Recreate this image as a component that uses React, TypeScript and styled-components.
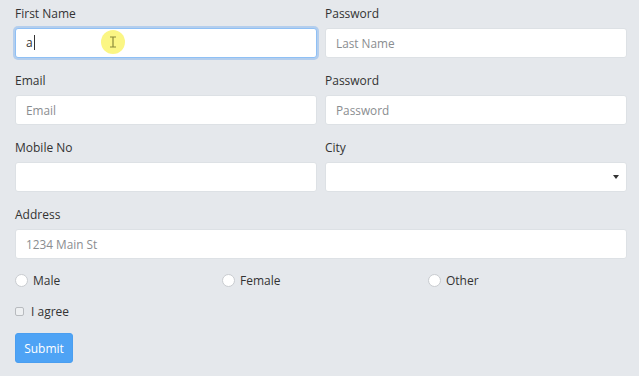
import React from 'react';
import styled, { createGlobalStyle } from 'styled-components';

const GlobalStyle = createGlobalStyle`
  html, body {
    margin: 0;
    padding: 0;
    background: #e5e8ec;
  }
  body {
    font-family: 'Open Sans', 'Noto Sans', Arial, sans-serif;
    color: #333;
  }
  * {
    box-sizing: border-box;
  }
`;

const Form = styled.form`
  position: relative;
  width: 639px;
  height: 376px;
  padding: 4px 12px 0 15px;
`;

const Row = styled.div`
  display: grid;
  grid-template-columns: 1fr 1fr;
  column-gap: 8px;
`;

const Group = styled.div`
  display: flex;
  flex-direction: column;
  margin-bottom: 13px;
`;

const Label = styled.label`
  font-size: 12px;
  line-height: 20px;
  height: 20px;
  margin-bottom: 4px;
  color: #333;
`;

const Input = styled.input<{ $focused?: boolean }>`
  height: 30px;
  width: 100%;
  padding: 0 10px;
  font-family: inherit;
  font-size: 11.8px;
  color: #444;
  background: #fff;
  border: 1px solid ${props => (props.$focused ? '#8fc0f5' : '#dde1e5')};
  border-radius: 3px;
  outline: none;
  box-shadow: ${props =>
    props.$focused ? '0 0 0 2px rgba(120, 175, 240, 0.45)' : 'none'};

  &::placeholder {
    color: #8a8d90;
  }
`;

const SelectBox = styled.div`
  position: relative;
  height: 30px;
  background: #fff;
  border: 1px solid #dde1e5;
  border-radius: 3px;
`;

const Caret = styled.span`
  position: absolute;
  right: 7px;
  top: 12px;
  width: 0;
  height: 0;
  border-left: 3px solid transparent;
  border-right: 3px solid transparent;
  border-top: 4px solid #333;
`;

const RadioRow = styled.div`
  display: grid;
  grid-template-columns: 207px 206px 1fr;
  height: 16px;
  align-items: center;
`;

const Option = styled.label`
  display: flex;
  align-items: center;
  gap: 5px;
  font-size: 12px;
  color: #333;
`;

const Radio = styled.span`
  width: 13px;
  height: 13px;
  border-radius: 50%;
  background: #fff;
  border: 1px solid #c9ccd0;
`;

const CheckRow = styled.div`
  display: flex;
  align-items: center;
  gap: 7px;
  height: 16px;
  margin-top: 15px;
  font-size: 12px;
`;

const Checkbox = styled.span`
  width: 9px;
  height: 9px;
  border: 1px solid #b8bbbf;
  border-radius: 2px;
  background: #eef0f2;
`;

const SubmitButton = styled.button`
  margin-top: 14px;
  height: 30px;
  width: 58px;
  padding: 0;
  font-family: inherit;
  font-size: 12px;
  color: #fff;
  background: #4ea3f5;
  border: 1px solid #4a9ef0;
  border-radius: 3px;
`;

const CursorHalo = styled.div`
  position: absolute;
  left: 101px;
  top: 30px;
  width: 24px;
  height: 24px;
  border-radius: 50%;
  background: rgba(250, 245, 110, 0.85);
  display: flex;
  align-items: center;
  justify-content: center;
  pointer-events: none;
`;

const TypedText = styled.span`
  position: absolute;
  left: 26px;
  top: 35px;
  font-size: 12px;
  color: #333;
  border-right: 1px solid #333;
  padding-right: 1px;
  line-height: 15px;
`;

export default function App() {
  return (
    <>
      <GlobalStyle />
      <Form onSubmit={e => e.preventDefault()}>
        <Row>
          <Group>
            <Label>First Name</Label>
            <Input $focused />
          </Group>
          <Group>
            <Label>Password</Label>
            <Input placeholder="Last Name" />
          </Group>
        </Row>
        <Row>
          <Group>
            <Label>Email</Label>
            <Input placeholder="Email" />
          </Group>
          <Group>
            <Label>Password</Label>
            <Input placeholder="Password" />
          </Group>
        </Row>
        <Row>
          <Group>
            <Label>Mobile No</Label>
            <Input />
          </Group>
          <Group>
            <Label>City</Label>
            <SelectBox>
              <Caret />
            </SelectBox>
          </Group>
        </Row>
        <Group>
          <Label>Address</Label>
          <Input placeholder="1234 Main St" />
        </Group>
        <RadioRow>
          <Option>
            <Radio />
            Male
          </Option>
          <Option>
            <Radio />
            Female
          </Option>
          <Option>
            <Radio />
            Other
          </Option>
        </RadioRow>
        <CheckRow>
          <Checkbox />
          I agree
        </CheckRow>
        <SubmitButton type="submit">Submit</SubmitButton>
        <TypedText>a</TypedText>
        <CursorHalo>
          <svg width="8" height="12" viewBox="0 0 8 12">
            <path
              d="M1 1h6M1 11h6M4 1v10"
              stroke="#8a8a3a"
              strokeWidth="1.2"
              fill="none"
            />
          </svg>
        </CursorHalo>
      </Form>
    </>
  );
}
